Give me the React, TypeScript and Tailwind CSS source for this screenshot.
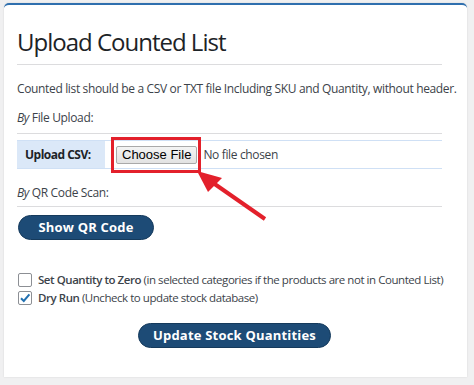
import React from 'react';

const font = { fontFamily: '"Open Sans", "Noto Sans", sans-serif' };

function Checkbox({ checked }: { checked?: boolean }) {
  return (
    <span className="relative inline-block w-[14px] h-[14px] shrink-0 border border-[#8c8f94] bg-white rounded-[2px]">
      {checked && (
        <svg viewBox="0 0 14 14" className="absolute -left-[1px] -top-[1px] w-[14px] h-[14px]">
          <path d="M3 7.2 L5.8 10 L11.4 3.4" fill="none" stroke="#2271b1" strokeWidth="2" />
        </svg>
      )}
    </span>
  );
}

export default function App() {
  return (
    <div className="relative w-[474px] h-[385px] bg-[#f0f0f1] pt-[3px] pl-[4px] overflow-hidden" style={font}>
      {/* Card */}
      <div className="w-[463px] h-[374px] bg-white border-t-2 border-[#2f6fae] rounded-t-[5px] shadow-[0_0_2px_rgba(0,0,0,0.12)] px-[13px] text-[#3c434a] text-[12px] tracking-[-0.35px]">
        <h1 className="mt-[21px] text-[24px] leading-[32px] font-medium tracking-[-1px] text-[#1d2327]">Upload Counted List</h1>
        <div className="mt-[6px] mr-[12px] border-t border-[#dcdcde]" />

        <p className="mt-[14px] leading-[20px] whitespace-nowrap">
          Counted list should be a CSV or TXT file Including SKU and Quantity, without header.
        </p>

        <p className="mt-[9px] leading-[20px]">
          <i>By</i> File Upload:
        </p>
        <div className="mt-[5px] mr-[12px] border-t border-[#dcdcde]" />

        {/* Upload row */}
        <div className="mt-[6px] mr-[12px] flex h-[29px] border-y border-[#cfe0f5]">
          <div className="w-[88px] bg-[#dbe8f8] flex items-center pl-[8px] font-bold tracking-[-0.5px] text-[#1d2327]">
            Upload CSV:
          </div>
          <div className="flex items-center pl-[11px]">
            <button
              className="h-[18px] px-[5px] border border-[#a9a9a9] rounded-[2px] bg-gradient-to-b from-[#f4f4f4] to-[#e2e2e2] text-[13px] leading-[16px] tracking-normal text-black"
              style={{ fontFamily: '"Liberation Sans", Arial, sans-serif' }}
            >
              Choose File
            </button>
            <span className="ml-[6px] text-[#3c434a]">No file chosen</span>
          </div>
        </div>

        <p className="mt-[14px] leading-[20px]">
          <i>By</i> QR Code Scan:
        </p>
        <div className="mt-[3px] mr-[12px] border-t border-[#dcdcde]" />

        <button className="mt-[8px] ml-[1px] w-[136px] h-[25px] rounded-full bg-[#1d4b76] border border-[#153a5c] text-white text-[13px] font-bold tracking-[0.2px]">
          Show QR Code
        </button>

        {/* Options */}
        <div className="mt-[31px] ml-[1px] flex flex-col text-[11.5px] leading-[18px] tracking-[-0.45px]">
          <label className="flex items-center gap-[6px] whitespace-nowrap">
            <Checkbox />
            <span>
              <span className="font-semibold">Set Quantity to Zero</span> (in selected categories if the products are not in Counted List)
            </span>
          </label>
          <label className="flex items-center gap-[6px] whitespace-nowrap">
            <Checkbox checked />
            <span>
              <span className="font-semibold">Dry Run</span> (Uncheck to update stock database)
            </span>
          </label>
        </div>

        <div className="mt-[16px] flex justify-center pr-[2px]">
          <button className="w-[193px] h-[25px] rounded-full bg-[#1d4b76] border border-[#153a5c] text-white text-[13px] font-bold tracking-[0.2px]">
            Update Stock Quantities
          </button>
        </div>
      </div>

      {/* Annotation: red box + arrow */}
      <div className="absolute left-[111px] top-[137px] w-[90px] h-[36px] border-[3px] border-[#e3202b]" />
      <svg className="absolute left-0 top-0" width="474" height="385">
        <line x1="265" y1="219" x2="206" y2="178" stroke="#e3202b" strokeWidth="4" />
        <polygon points="197,171 222,178 208,192" fill="#e3202b" />
      </svg>
    </div>
  );
}
